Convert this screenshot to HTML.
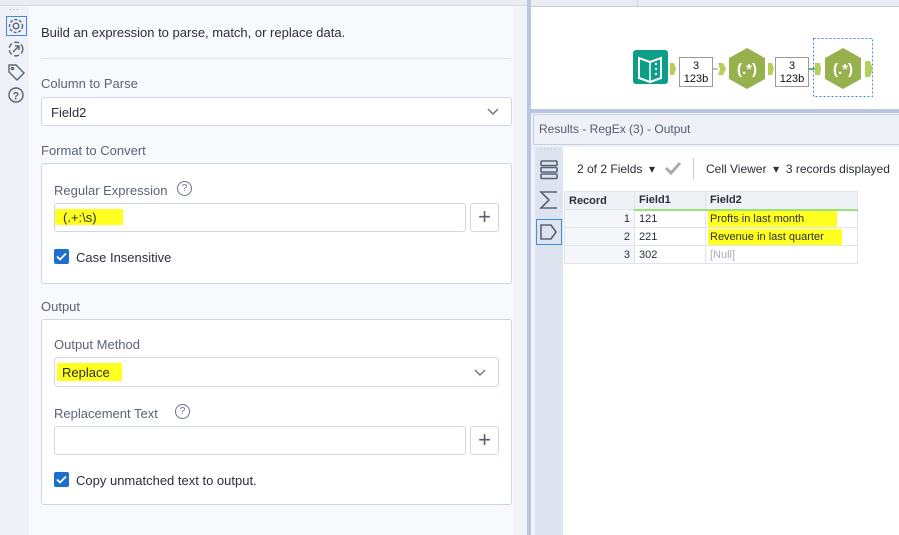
<!DOCTYPE html>
<html><head><style>
*{box-sizing:border-box;margin:0;padding:0}
body{width:899px;height:535px;overflow:hidden;background:#f5f7fb;font-family:"Liberation Sans",sans-serif;font-size:13px;color:#2b2f3a;position:relative}
.abs{position:absolute}
.lbl{color:#5a6275;font-size:13px}
.box{background:#fff;border:1px solid #cfd6e4;border-radius:3px}
.hl{background:#ffff20}
.cb{width:15px;height:15px;background:#1f6fd1;border-radius:2px}
.plus{width:29px;height:29px;background:#fff;border:1px solid #cfd6e4;border-radius:3px;color:#555f70;font-size:22px;text-align:center;line-height:26px}
.q{width:15px;height:15px;border:1.3px solid #6a7389;border-radius:50%;font-size:10px;color:#6a7389;text-align:center;line-height:13px}
table{border-collapse:collapse;font-size:11px}
td{border:1px solid #dfe3ea;height:18px;padding:0 4px}
</style></head><body>
<div class="abs" style="left:0;top:0;width:29px;height:535px;background:#eef1f7"></div>
<div class="abs" style="left:0;top:0;width:530px;height:6px;background:#e9ecf2;border-bottom:1px solid #d5dae4"></div>
<div class="abs" style="left:9px;top:5px;font-size:8px;color:#888;letter-spacing:1px">···</div>
<div class="abs" style="left:6px;top:16px;width:21px;height:20px;border:1px solid #3f8ae0"></div>
<svg class="abs" style="left:0;top:0" width="29" height="110">
<g fill="none" stroke="#5a6275" stroke-width="1.4">
<circle cx="16" cy="26" r="2.8"/><circle cx="16" cy="26" r="6.5" stroke-dasharray="3 1.8"/>
<circle cx="16" cy="49" r="6.8" stroke-dasharray="5 2.5"/><path d="M13 52l6-6M15 46h4v4"/>
<path d="M9 65v7l8 8 7-7-8-8z"/><circle cx="12.5" cy="68.5" r="1.1"/>
<circle cx="16" cy="95" r="7"/></g>
<text x="12.5" y="99.5" font-size="11" font-weight="bold" fill="#5a6275" font-family="Liberation Sans">?</text>
</svg>
<div class="abs" style="left:29px;top:7px;width:498px;height:528px;background:#f7f9fd"></div>
<div class="abs" style="left:514px;top:7px;width:13px;height:528px;background:#f1f3f8"></div>
<div class="abs" style="left:41px;top:25px;font-size:13px">Build an expression to parse, match, or replace data.</div>
<div class="abs" style="left:41px;top:58px;width:470px;height:1px;background:#e1e5ee"></div>
<div class="abs lbl" style="left:41px;top:76px">Column to Parse</div>
<div class="abs box" style="left:41px;top:97px;width:471px;height:29px"><span class="abs" style="left:9px;top:7px">Field2</span><svg class="abs" style="right:12px;top:10px" width="12" height="8"><path d="M1 1l5 5 5-5" fill="none" stroke="#6a7389" stroke-width="1.4"/></svg></div>
<div class="abs lbl" style="left:41px;top:143px">Format to Convert</div>
<div class="abs box" style="left:41px;top:163px;width:471px;height:121px"></div>
<div class="abs lbl" style="left:54px;top:183px">Regular Expression</div>
<div class="abs q" style="left:177px;top:181px">?</div>
<div class="abs box" style="left:54px;top:203px;width:412px;height:29px"></div>
<div class="abs hl" style="left:55px;top:209px;width:68px;height:16px"></div>
<div class="abs" style="left:63px;top:210px">(.+:\s)</div>
<div class="abs plus" style="left:470px;top:203px">+</div>
<div class="abs cb" style="left:54px;top:249px"><svg width="15" height="15"><path d="M3 7.5l3 3 6-6" fill="none" stroke="#fff" stroke-width="1.8"/></svg></div>
<div class="abs" style="left:76px;top:250px">Case Insensitive</div>
<div class="abs lbl" style="left:41px;top:299px">Output</div>
<div class="abs box" style="left:41px;top:319px;width:471px;height:186px"></div>
<div class="abs lbl" style="left:54px;top:337px">Output Method</div>
<div class="abs box" style="left:54px;top:357px;width:445px;height:30px"><svg class="abs" style="right:12px;top:11px" width="12" height="8"><path d="M1 1l5 5 5-5" fill="none" stroke="#6a7389" stroke-width="1.4"/></svg></div>
<div class="abs hl" style="left:57px;top:363px;width:65px;height:18px"></div>
<div class="abs" style="left:62px;top:365px">Replace</div>
<div class="abs lbl" style="left:54px;top:406px">Replacement Text</div>
<div class="abs q" style="left:175px;top:404px">?</div>
<div class="abs box" style="left:54px;top:426px;width:412px;height:29px"></div>
<div class="abs plus" style="left:470px;top:426px">+</div>
<div class="abs cb" style="left:54px;top:472px"><svg width="15" height="15"><path d="M3 7.5l3 3 6-6" fill="none" stroke="#fff" stroke-width="1.8"/></svg></div>
<div class="abs" style="left:76px;top:473px">Copy unmatched text to output.</div>
<div class="abs" style="left:527px;top:0;width:4px;height:535px;background:#b9c6df"></div>
<div class="abs" style="left:531px;top:0;width:368px;height:7px;background:#e9ecf2;border-bottom:1px solid #c9cfdb"></div>
<div class="abs" style="left:637px;top:0;width:1px;height:7px;background:#c9cfdb"></div>
<div class="abs" style="left:531px;top:7px;width:368px;height:102px;background:#fff"></div>
<div class="abs" style="left:531px;top:109px;width:368px;height:4px;background:#b9c6df"></div>
<svg class="abs" style="left:630px;top:38px" width="250" height="60">
<rect x="3" y="12" width="35" height="34" rx="3" fill="#0e9d87"/>
<path d="M9 20v20l11 4 11-4V20l-11 4z" fill="none" stroke="#fff" stroke-width="2"/><path d="M20 24v20" stroke="#fff" stroke-width="1.5"/>
<circle cx="26" cy="26" r="1.2" fill="#fff"/><circle cx="26" cy="31" r="1.2" fill="#fff"/><circle cx="26" cy="36" r="1.2" fill="#fff"/>
<path d="M40 25h4l2 6-2 6h-4z" fill="#b6cf58"/>
<rect x="49.5" y="19.5" width="33" height="29" fill="#fff" stroke="#999"/>
<text x="66" y="31" font-size="11" text-anchor="middle" fill="#111">3</text><text x="66" y="44" font-size="11" text-anchor="middle" fill="#111">123b</text>
<path d="M83 31h5" stroke="#888" stroke-width="1"/>
<path d="M88 25h5l3 6-3 6h-5l2-6z" fill="#b6cf58"/>
<path d="M117 10l18 10v21L117 51l-18-10V20z" fill="#98b14f"/>
<text x="117" y="36" font-size="15" font-weight="bold" text-anchor="middle" fill="#fff">(.*)</text>
<path d="M138 25h4l2 6-2 6h-4z" fill="#b6cf58"/>
<rect x="145.5" y="19.5" width="33" height="29" fill="#fff" stroke="#999"/>
<text x="162" y="31" font-size="11" text-anchor="middle" fill="#111">3</text><text x="162" y="44" font-size="11" text-anchor="middle" fill="#111">123b</text>
<path d="M179 31h6" stroke="#2e9a55" stroke-width="1.5"/>
<path d="M185 25h5l1 6-1 6h-5z" fill="#b6cf58"/>
<rect x="183.5" y="0.5" width="59" height="58" fill="none" stroke="#3f8ae0" stroke-dasharray="2 2"/>
<path d="M213 10l18 10v21L213 51l-18-10V20z" fill="#98b14f"/>
<text x="213" y="36" font-size="15" font-weight="bold" text-anchor="middle" fill="#fff">(.*)</text>
<path d="M235 23h5l3 8-3 8h-5z" fill="#b6cf58"/>
</svg>
<div class="abs" style="left:531px;top:113px;width:368px;height:422px;background:#eef1f8"></div>
<div class="abs" style="left:533px;top:114px;width:366px;height:31px;border:1px solid #c9cfdb;border-right:none;background:#eef1f8"></div>
<div class="abs" style="left:539px;top:122px;font-size:12px;color:#555c6a">Results - RegEx (3) - Output</div>
<div class="abs" style="left:535px;top:147px;width:28px;height:388px;background:#dde3ef"></div>
<div class="abs" style="left:540px;top:146px;font-size:7px;color:#999;letter-spacing:1px">·····</div>
<svg class="abs" style="left:535px;top:155px" width="28" height="95"><g fill="none" stroke="#5a6275" stroke-width="1.6">
<rect x="6" y="6" width="16" height="4.5" rx="1"/><rect x="6" y="12.5" width="16" height="4.5" rx="1"/><rect x="6" y="19" width="16" height="4.5" rx="1"/>
<path d="M22 37H6l8 8-8 8h16"/>
<path d="M6 70h10l5 7-5 7H6z"/></g>
<rect x="1.5" y="64.5" width="25" height="25" fill="none" stroke="#3f8ae0"/></svg>
<div class="abs" style="left:563px;top:147px;width:336px;height:43px;background:#fff"></div>
<div class="abs" style="left:577px;top:162px;font-size:12px">2 of 2 Fields &nbsp;▾</div>
<svg class="abs" style="left:664px;top:161px" width="18" height="14"><path d="M2 7l5 5 9-10" fill="none" stroke="#aaa" stroke-width="3"/></svg>
<div class="abs" style="left:693px;top:158px;width:1px;height:22px;background:#ccc"></div>
<div class="abs" style="left:706px;top:162px;font-size:12px">Cell Viewer &nbsp;▾ &nbsp;3 records displayed</div>
<div class="abs" style="left:563px;top:190px;width:336px;height:345px;background:#fff"></div>
<table class="abs" style="left:564px;top:191px">
<tr style="background:#eef1f6;font-weight:bold"><td style="width:70px">Record</td><td style="width:71px;border-bottom:2px solid #9be07a">Field1</td><td style="width:152px;border-bottom:2px solid #9be07a">Field2</td></tr>
<tr><td style="text-align:right;background:#f4f6fa">1</td><td>121</td><td><span class="hl" style="display:inline-block;width:129px;padding:2px 2px;margin-left:-2px">Profts in last month</span></td></tr>
<tr><td style="text-align:right;background:#f4f6fa">2</td><td>221</td><td><span class="hl" style="display:inline-block;width:134px;padding:2px 2px;margin-left:-2px">Revenue in last quarter</span></td></tr>
<tr><td style="text-align:right;background:#f4f6fa">3</td><td>302</td><td style="color:#aab">[Null]</td></tr>
</table>
</body></html>
